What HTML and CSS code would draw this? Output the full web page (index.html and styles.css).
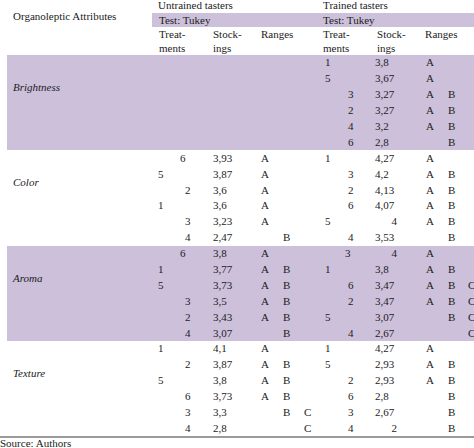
FILE: index.html
```html
<!DOCTYPE html>
<html>
  <head>
    <meta charset="UTF-8" />
    <title>Organoleptic attributes - Tukey test</title>
    <link rel="stylesheet" href="styles.css">
  </head>
  <body>
    <table class="grid">
      <colgroup>
        <col class="w-attr" />
        <col class="w-treat-u" />
        <col class="w-stock-u" />
        <col class="w-rng" />
        <col class="w-rng" />
        <col class="w-rng-c" />
        <col class="w-treat-t" />
        <col class="w-stock-t" />
        <col class="w-rng" />
        <col class="w-rng" />
        <col class="w-rng-end" />
      </colgroup>

      <thead>
        <tr class="h-group">
          <td class="attr head-attr" rowspan="3">Organoleptic Attributes</td>
          <td class="hu" colspan="5">Untrained tasters</td>
          <td class="ht" colspan="5">Trained tasters</td>
        </tr>
        <tr class="h-test">
          <td class="hu2 shade" colspan="5">Test: Tukey</td>
          <td class="ht shade" colspan="5">Test: Tukey</td>
        </tr>
        <tr class="h-cols">
          <td class="hu2">Treat-<br>ments</td>
          <td class="us">Stock-<br>ings</td>
          <td class="ra" colspan="3">Ranges</td>
          <td class="ht">Treat-<br>ments</td>
          <td class="hts">Stock-<br>ings</td>
          <td class="htr" colspan="3">Ranges</td>
        </tr>
      </thead>

      <!-- Brightness -->
      <tbody class="shade">
        <tr class="row">
          <td class="attr label" rowspan="6">Brightness</td>
          <td class="ut"></td><td class="us"></td><td class="ra"></td><td class="rb"></td><td class="rc"></td>
          <td class="tt tl">1</td><td class="ts">3,8</td><td class="ta">A</td><td class="tb"></td><td class="tc"></td>
        </tr>
        <tr class="row">
          <td class="ut"></td><td class="us"></td><td class="ra"></td><td class="rb"></td><td class="rc"></td>
          <td class="tt tl">5</td><td class="ts">3,67</td><td class="ta">A</td><td class="tb"></td><td class="tc"></td>
        </tr>
        <tr class="row">
          <td class="ut"></td><td class="us"></td><td class="ra"></td><td class="rb"></td><td class="rc"></td>
          <td class="tt tr">3</td><td class="ts">3,27</td><td class="ta">A</td><td class="tb">B</td><td class="tc"></td>
        </tr>
        <tr class="row">
          <td class="ut"></td><td class="us"></td><td class="ra"></td><td class="rb"></td><td class="rc"></td>
          <td class="tt tr">2</td><td class="ts">3,27</td><td class="ta">A</td><td class="tb">B</td><td class="tc"></td>
        </tr>
        <tr class="row">
          <td class="ut"></td><td class="us"></td><td class="ra"></td><td class="rb"></td><td class="rc"></td>
          <td class="tt tr">4</td><td class="ts">3,2</td><td class="ta">A</td><td class="tb">B</td><td class="tc"></td>
        </tr>
        <tr class="row">
          <td class="ut"></td><td class="us"></td><td class="ra"></td><td class="rb"></td><td class="rc"></td>
          <td class="tt tr">6</td><td class="ts">2,8</td><td class="ta"></td><td class="tb">B</td><td class="tc"></td>
        </tr>
      </tbody>

      <!-- Color -->
      <tbody>
        <tr class="row">
          <td class="attr label" rowspan="6">Color</td>
          <td class="ut tm">6</td><td class="us">3,93</td><td class="ra">A</td><td class="rb"></td><td class="rc"></td>
          <td class="tt tl">1</td><td class="ts">4,27</td><td class="ta">A</td><td class="tb"></td><td class="tc"></td>
        </tr>
        <tr class="row">
          <td class="ut tl">5</td><td class="us">3,87</td><td class="ra">A</td><td class="rb"></td><td class="rc"></td>
          <td class="tt tr">3</td><td class="ts">4,2</td><td class="ta">A</td><td class="tb">B</td><td class="tc"></td>
        </tr>
        <tr class="row">
          <td class="ut tr">2</td><td class="us">3,6</td><td class="ra">A</td><td class="rb"></td><td class="rc"></td>
          <td class="tt tr">2</td><td class="ts">4,13</td><td class="ta">A</td><td class="tb">B</td><td class="tc"></td>
        </tr>
        <tr class="row">
          <td class="ut tl">1</td><td class="us">3,6</td><td class="ra">A</td><td class="rb"></td><td class="rc"></td>
          <td class="tt tr">6</td><td class="ts">4,07</td><td class="ta">A</td><td class="tb">B</td><td class="tc"></td>
        </tr>
        <tr class="row">
          <td class="ut tr">3</td><td class="us">3,23</td><td class="ra">A</td><td class="rb"></td><td class="rc"></td>
          <td class="tt tl">5</td><td class="ts int">4</td><td class="ta">A</td><td class="tb">B</td><td class="tc"></td>
        </tr>
        <tr class="row">
          <td class="ut tr">4</td><td class="us">2,47</td><td class="ra"></td><td class="rb">B</td><td class="rc"></td>
          <td class="tt tr">4</td><td class="ts">3,53</td><td class="ta"></td><td class="tb">B</td><td class="tc"></td>
        </tr>
      </tbody>

      <!-- Aroma -->
      <tbody class="shade">
        <tr class="row">
          <td class="attr label" rowspan="6">Aroma</td>
          <td class="ut tm">6</td><td class="us">3,8</td><td class="ra">A</td><td class="rb"></td><td class="rc"></td>
          <td class="tt tm">3</td><td class="ts int">4</td><td class="ta">A</td><td class="tb"></td><td class="tc"></td>
        </tr>
        <tr class="row">
          <td class="ut tl">1</td><td class="us">3,77</td><td class="ra">A</td><td class="rb">B</td><td class="rc"></td>
          <td class="tt tl">1</td><td class="ts">3,8</td><td class="ta">A</td><td class="tb">B</td><td class="tc"></td>
        </tr>
        <tr class="row">
          <td class="ut tl">5</td><td class="us">3,73</td><td class="ra">A</td><td class="rb">B</td><td class="rc"></td>
          <td class="tt tr">6</td><td class="ts">3,47</td><td class="ta">A</td><td class="tb">B</td><td class="tc">C</td>
        </tr>
        <tr class="row">
          <td class="ut tr">3</td><td class="us">3,5</td><td class="ra">A</td><td class="rb">B</td><td class="rc"></td>
          <td class="tt tr">2</td><td class="ts">3,47</td><td class="ta">A</td><td class="tb">B</td><td class="tc">C</td>
        </tr>
        <tr class="row">
          <td class="ut tr">2</td><td class="us">3,43</td><td class="ra">A</td><td class="rb">B</td><td class="rc"></td>
          <td class="tt tl">5</td><td class="ts">3,07</td><td class="ta"></td><td class="tb">B</td><td class="tc">C</td>
        </tr>
        <tr class="row">
          <td class="ut tr">4</td><td class="us">3,07</td><td class="ra"></td><td class="rb">B</td><td class="rc"></td>
          <td class="tt tr">4</td><td class="ts">2,67</td><td class="ta"></td><td class="tb"></td><td class="tc">C</td>
        </tr>
      </tbody>

      <!-- Texture -->
      <tbody>
        <tr class="row">
          <td class="attr label" rowspan="6">Texture</td>
          <td class="ut tl">1</td><td class="us">4,1</td><td class="ra">A</td><td class="rb"></td><td class="rc"></td>
          <td class="tt tl">1</td><td class="ts">4,27</td><td class="ta">A</td><td class="tb"></td><td class="tc"></td>
        </tr>
        <tr class="row">
          <td class="ut tr">2</td><td class="us">3,87</td><td class="ra">A</td><td class="rb">B</td><td class="rc"></td>
          <td class="tt tl">5</td><td class="ts">2,93</td><td class="ta">A</td><td class="tb">B</td><td class="tc"></td>
        </tr>
        <tr class="row">
          <td class="ut tl">5</td><td class="us">3,8</td><td class="ra">A</td><td class="rb">B</td><td class="rc"></td>
          <td class="tt tr">2</td><td class="ts">2,93</td><td class="ta">A</td><td class="tb">B</td><td class="tc"></td>
        </tr>
        <tr class="row">
          <td class="ut tr">6</td><td class="us">3,73</td><td class="ra">A</td><td class="rb">B</td><td class="rc"></td>
          <td class="tt tr">6</td><td class="ts">2,8</td><td class="ta"></td><td class="tb">B</td><td class="tc"></td>
        </tr>
        <tr class="row">
          <td class="ut tr">3</td><td class="us">3,3</td><td class="ra"></td><td class="rb">B</td><td class="rc">C</td>
          <td class="tt tr">3</td><td class="ts">2,67</td><td class="ta"></td><td class="tb">B</td><td class="tc"></td>
        </tr>
        <tr class="row">
          <td class="ut tr">4</td><td class="us">2,8</td><td class="ra"></td><td class="rb"></td><td class="rc">C</td>
          <td class="tt tr">4</td><td class="ts int">2</td><td class="ta"></td><td class="tb">B</td><td class="tc"></td>
        </tr>
      </tbody>
    </table>

    <div class="source">Source: Authors</div>
  </body>
</html>
```

FILE: styles.css
```css
:root {
  --band: #ccc0da;
  --text: #1c1c1c;
  --rule: #9a9a9a;
}

body {
  margin: 0;
  padding: 0;
  overflow: hidden;
  background: #ffffff;
  color: var(--text);
  font-family: "Liberation Serif", "Times New Roman", serif;
  font-size: 11px;
}

.grid {
  margin-left: 7px;
  width: 483px;
  border-collapse: collapse;
  table-layout: fixed;
}

.grid td {
  padding: 0;
  white-space: nowrap;
  vertical-align: middle;
  line-height: 15px;
}

/* column widths */
.w-attr { width: 145px; }
.w-treat-u { width: 56px; }
.w-stock-u { width: 47px; }
.w-rng { width: 22px; }
.w-rng-c { width: 23px; }
.w-treat-t { width: 48px; }
.w-stock-t { width: 50px; }
.w-rng-end { width: 26px; }

.shade td,
td.shade {
  background: var(--band);
}

/* header */
.h-group td {
  height: 13px;
  line-height: 11px;
  vertical-align: top;
}

.h-test td {
  height: 14px;
  line-height: 14px;
}

.h-cols td {
  height: 27px;
  line-height: 14px;
  vertical-align: top;
}

.head-attr {
  padding-top: 11px !important;
  line-height: 11px !important;
  vertical-align: top !important;
}

.hu { padding-left: 6px !important; }
.hu2 { padding-left: 7px !important; }
.ht { padding-left: 1px !important; }
.hts { padding-left: 7px !important; }
.htr { padding-left: 5px !important; }

/* body rows */
.row {
  height: 15.9px;
}

.attr {
  padding-left: 6px !important;
}

.label {
  font-style: italic;
  vertical-align: top !important;
  padding-top: 24px !important;
  line-height: 16px !important;
}

/* untrained */
.ut { padding-left: 6px !important; }
.ut.tm { padding-left: 28px !important; }
.ut.tr { padding-left: 33px !important; }
.us { padding-left: 5px !important; }
.ra { padding-left: 6px !important; }
.rb { padding-left: 6px !important; }
.rc { padding-left: 5px !important; }

/* trained */
.tt { padding-left: 3px !important; }
.tt.tm { padding-left: 23px !important; }
.tt.tr { padding-left: 26px !important; }
.ts { padding-left: 5px !important; }
.ts.int {
  text-align: right;
  padding-right: 23px !important;
}
.ta { padding-left: 6px !important; }
.tb { padding-left: 6px !important; }
.tc { padding-left: 4px !important; }

.source {
  border-top: 2px solid var(--rule);
  line-height: 10px;
}
```
